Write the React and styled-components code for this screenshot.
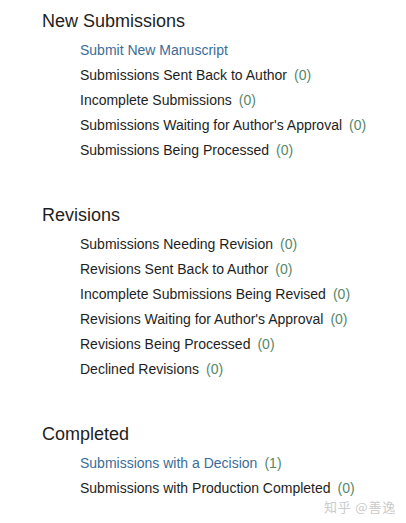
import React from 'react';
import styled, { createGlobalStyle } from 'styled-components';

const Global = createGlobalStyle`
  body {
    margin: 0;
    background: #fff;
    font-family: Arial, "Liberation Sans", sans-serif;
  }
`;

const Page = styled.div`
  position: relative;
  width: 406px;
  height: 523px;
  padding: 10px 0 0 42px;
  box-sizing: border-box;
  overflow: hidden;
`;

const Section = styled.section`
  margin-bottom: 41px;
`;

const Heading = styled.h2`
  margin: 0;
  font-size: 18px;
  font-weight: normal;
  color: #1e1e1e;
  line-height: 22px;
`;

const List = styled.ul`
  list-style: none;
  margin: 6px 0 0;
  padding: 0 0 0 38px;
`;

const Item = styled.li`
  font-size: 14px;
  line-height: 25px;
  height: 25px;
  color: ${p => (p.$link ? '#3b6d99' : '#1e1e1e')};
  white-space: nowrap;
`;

const Count = styled.span`
  margin-left: 7px;
  color: #56876a;
`;

/* site watermark in the lower right corner */
const Watermark = styled.div`
  position: absolute;
  left: 324px;
  top: 499px;
  font-family: "Noto Sans CJK SC", sans-serif;
  font-size: 13px;
  line-height: 15px;
  color: #cbcbcb;
  letter-spacing: 0.8px;
`;

const sections = [
  {
    title: 'New Submissions',
    items: [
      { label: 'Submit New Manuscript', link: true },
      { label: 'Submissions Sent Back to Author', count: 0 },
      { label: 'Incomplete Submissions', count: 0 },
      { label: "Submissions Waiting for Author's Approval", count: 0 },
      { label: 'Submissions Being Processed', count: 0 },
    ],
  },
  {
    title: 'Revisions',
    items: [
      { label: 'Submissions Needing Revision', count: 0 },
      { label: 'Revisions Sent Back to Author', count: 0 },
      { label: 'Incomplete Submissions Being Revised', count: 0 },
      { label: "Revisions Waiting for Author's Approval", count: 0 },
      { label: 'Revisions Being Processed', count: 0 },
      { label: 'Declined Revisions', count: 0 },
    ],
  },
  {
    title: 'Completed',
    items: [
      { label: 'Submissions with a Decision', count: 1, link: true },
      { label: 'Submissions with Production Completed', count: 0 },
    ],
  },
];

export default function App() {
  return (
    <Page>
      <Global />
      {sections.map(s => (
        <Section key={s.title}>
          <Heading>{s.title}</Heading>
          <List>
            {s.items.map(it => (
              <Item key={it.label} $link={it.link}>
                {it.label}
                {it.count !== undefined && <Count>({it.count})</Count>}
              </Item>
            ))}
          </List>
        </Section>
      ))}
      <Watermark>知乎 @善逸</Watermark>
    </Page>
  );
}
